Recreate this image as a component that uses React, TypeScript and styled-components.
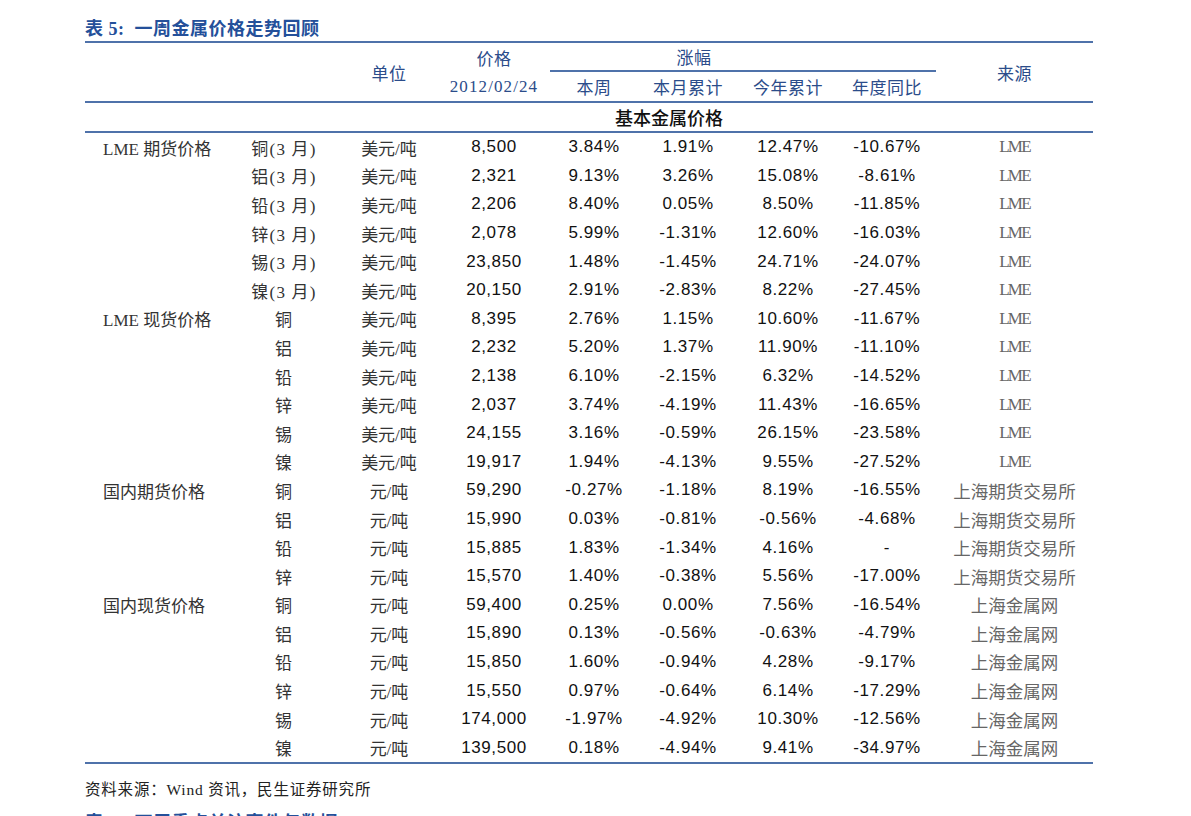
import React from "react";
import styled, { createGlobalStyle } from "styled-components";

const GlobalStyle = createGlobalStyle`
  body {
    margin: 0;
    background: #ffffff;
    font-family: "Liberation Serif", "Noto Sans CJK SC", serif;
  }
`;

const cols = "143px 112px 98px 112px 88px 100px 100px 98px 157px";
const lineColor = "#4f72aa";
const headColor = "#2b4c8a";

const Page = styled.div`
  width: 1093px;
  padding: 17px 0 0 85px;
  height: 816px;
  box-sizing: border-box;
  overflow: hidden;
`;

const Caption = styled.div`
  font-family: "Liberation Serif", "Noto Sans CJK SC", serif;
  font-size: 18px;
  font-weight: 700;
  color: #24509a;
  line-height: 24px;
  height: 24px;
  letter-spacing: 0.5px;
`;

const Table = styled.div`
  border-top: 2px solid ${lineColor};
  border-bottom: 2px solid ${lineColor};
`;

const Header = styled.div`
  display: grid;
  grid-template-columns: ${cols};
  grid-template-rows: 29px 29px;
  border-bottom: 2px solid ${lineColor};
  color: ${headColor};
  font-size: 17px;
`;

const HeadCell = styled.div<{ $col: string; $row: string; $line?: boolean; $padRight?: number }>`
  grid-column: ${(p) => p.$col};
  grid-row: ${(p) => p.$row};
  display: flex;
  align-items: center;
  justify-content: center;
  padding-right: ${(p) => p.$padRight ?? 0}px;
  border-bottom: ${(p) => (p.$line ? `2px solid ${lineColor}` : "none")};
  letter-spacing: 0.5px;
`;

const DateText = styled.span`
  font-family: "Liberation Serif", serif;
  font-size: 17px;
  letter-spacing: 1.1px;
`;

const SectionRow = styled.div`
  height: 28px;
  display: flex;
  align-items: center;
  padding-left: 530px;
  font-size: 18px;
  color: #111;
  font-weight: 500;
  border-bottom: 2px solid ${lineColor};
`;

const Row = styled.div`
  display: grid;
  grid-template-columns: ${cols};
  height: 28.6px;
  align-items: center;
`;

const Category = styled.div`
  padding-left: 18px;
  font-size: 17px;
  color: #333;
  white-space: nowrap;
`;

const Label = styled.div<{ $spaced?: boolean }>`
  text-align: center;
  font-size: 17px;
  color: #333;
  white-space: nowrap;
  letter-spacing: ${(p) => (p.$spaced ? "1.2px" : "0")};
`;

const Num = styled.div`
  text-align: center;
  font-family: "Liberation Sans", Arial, sans-serif;
  font-size: 17px;
  letter-spacing: 0.6px;
  color: #111;
`;

const Source = styled.div<{ $latin?: boolean }>`
  text-align: center;
  color: #666;
  font-size: ${(p) => (p.$latin ? "17px" : "17.5px")};
  letter-spacing: ${(p) => (p.$latin ? "-1.8px" : "0")};
  white-space: nowrap;
`;

const Note = styled.div`
  margin-top: 15px;
  font-size: 15.5px;
  color: #222;
  line-height: 22px;
  letter-spacing: 0.8px;
`;

const NextCaption = styled(Caption)`
  margin-top: 10px;
`;

type Rec = [string, string, string, string, string, string, string, string, string];

const rows: Rec[] = [
  ["LME 期货价格", "铜(3 月)", "美元/吨", "8,500", "3.84%", "1.91%", "12.47%", "-10.67%", "LME"],
  ["", "铝(3 月)", "美元/吨", "2,321", "9.13%", "3.26%", "15.08%", "-8.61%", "LME"],
  ["", "铅(3 月)", "美元/吨", "2,206", "8.40%", "0.05%", "8.50%", "-11.85%", "LME"],
  ["", "锌(3 月)", "美元/吨", "2,078", "5.99%", "-1.31%", "12.60%", "-16.03%", "LME"],
  ["", "锡(3 月)", "美元/吨", "23,850", "1.48%", "-1.45%", "24.71%", "-24.07%", "LME"],
  ["", "镍(3 月)", "美元/吨", "20,150", "2.91%", "-2.83%", "8.22%", "-27.45%", "LME"],
  ["LME 现货价格", "铜", "美元/吨", "8,395", "2.76%", "1.15%", "10.60%", "-11.67%", "LME"],
  ["", "铝", "美元/吨", "2,232", "5.20%", "1.37%", "11.90%", "-11.10%", "LME"],
  ["", "铅", "美元/吨", "2,138", "6.10%", "-2.15%", "6.32%", "-14.52%", "LME"],
  ["", "锌", "美元/吨", "2,037", "3.74%", "-4.19%", "11.43%", "-16.65%", "LME"],
  ["", "锡", "美元/吨", "24,155", "3.16%", "-0.59%", "26.15%", "-23.58%", "LME"],
  ["", "镍", "美元/吨", "19,917", "1.94%", "-4.13%", "9.55%", "-27.52%", "LME"],
  ["国内期货价格", "铜", "元/吨", "59,290", "-0.27%", "-1.18%", "8.19%", "-16.55%", "上海期货交易所"],
  ["", "铝", "元/吨", "15,990", "0.03%", "-0.81%", "-0.56%", "-4.68%", "上海期货交易所"],
  ["", "铅", "元/吨", "15,885", "1.83%", "-1.34%", "4.16%", "-", "上海期货交易所"],
  ["", "锌", "元/吨", "15,570", "1.40%", "-0.38%", "5.56%", "-17.00%", "上海期货交易所"],
  ["国内现货价格", "铜", "元/吨", "59,400", "0.25%", "0.00%", "7.56%", "-16.54%", "上海金属网"],
  ["", "铝", "元/吨", "15,890", "0.13%", "-0.56%", "-0.63%", "-4.79%", "上海金属网"],
  ["", "铅", "元/吨", "15,850", "1.60%", "-0.94%", "4.28%", "-9.17%", "上海金属网"],
  ["", "锌", "元/吨", "15,550", "0.97%", "-0.64%", "6.14%", "-17.29%", "上海金属网"],
  ["", "锡", "元/吨", "174,000", "-1.97%", "-4.92%", "10.30%", "-12.56%", "上海金属网"],
  ["", "镍", "元/吨", "139,500", "0.18%", "-4.94%", "9.41%", "-34.97%", "上海金属网"],
];

export default function App() {
  return (
    <Page>
      <GlobalStyle />
      <Caption>表 5:&nbsp; 一周金属价格走势回顾</Caption>
      <Table>
        <Header>
          <HeadCell $col="3" $row="1 / 3">单位</HeadCell>
          <HeadCell $col="4" $row="1">价格</HeadCell>
          <HeadCell $col="5 / 9" $row="1" $line $padRight={98}>涨幅</HeadCell>
          <HeadCell $col="9" $row="1 / 3">来源</HeadCell>
          <HeadCell $col="4" $row="2">
            <DateText>2012/02/24</DateText>
          </HeadCell>
          <HeadCell $col="5" $row="2">本周</HeadCell>
          <HeadCell $col="6" $row="2">本月累计</HeadCell>
          <HeadCell $col="7" $row="2">今年累计</HeadCell>
          <HeadCell $col="8" $row="2">年度同比</HeadCell>
        </Header>
        <SectionRow>基本金属价格</SectionRow>
        {rows.map((r, i) => (
          <Row key={i}>
            <Category>{r[0]}</Category>
            <Label $spaced>{r[1]}</Label>
            <Label>{r[2]}</Label>
            <Num>{r[3]}</Num>
            <Num>{r[4]}</Num>
            <Num>{r[5]}</Num>
            <Num>{r[6]}</Num>
            <Num>{r[7]}</Num>
            <Source $latin={r[8] === "LME"}>{r[8]}</Source>
          </Row>
        ))}
      </Table>
      <Note>资料来源：Wind 资讯，民生证券研究所</Note>
      <NextCaption>表 6:&nbsp; 下周重点关注事件与数据</NextCaption>
    </Page>
  );
}
